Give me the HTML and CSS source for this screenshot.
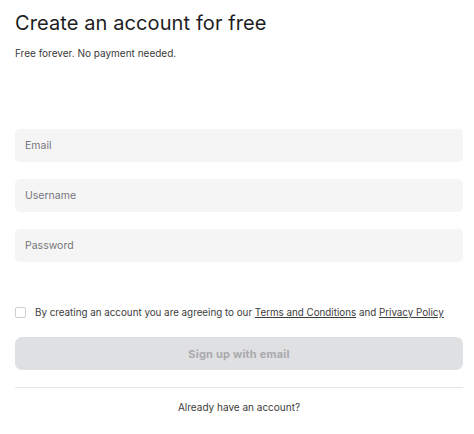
FILE: index.html
```html
<!DOCTYPE html>
<html lang="en">
<head>
<meta charset="utf-8">
<title>Create an account</title>
<link rel="stylesheet" href="styles.css">
</head>
<body>
<main class="signup">
  <header class="head">
    <h1 class="title">Create an account for free</h1>
    <p class="subtitle">Free forever. No payment needed.</p>
  </header>
  <form class="form">
    <div class="fields">
      <input class="field" type="email" placeholder="Email">
      <input class="field" type="text" placeholder="Username">
      <input class="field" type="password" placeholder="Password">
    </div>
    <label class="agree">
      <span class="box"></span>
      <span class="agree-text">By creating an account you are agreeing to our <a href="#">Terms and Conditions</a> and <a href="#">Privacy Policy</a></span>
    </label>
    <button class="submit" type="button" disabled>Sign up with email</button>
  </form>
  <div class="divider"></div>
  <p class="login">Already have an account?</p>
</main>
</body>
</html>
```

FILE: styles.css
```css
* { box-sizing: border-box; }
html, body { margin: 0; padding: 0; background: #ffffff; }
body {
  font-family: Inter, "Open Sans", "Liberation Sans", sans-serif;
  color: #222;
}
.signup {
  padding: 0 11px 0 15px;
  display: flex;
  flex-direction: column;
}
.head { padding-top: 10px; }
.title {
  margin: 0;
  font-size: 20px;
  line-height: 26px;
  font-weight: 400;
  color: #1d1d1f;
  letter-spacing: 0.1px;
}
.subtitle {
  margin: 10px 0 0;
  font-size: 10px;
  line-height: 14px;
  color: #3a3a3a;
}
.form {
  margin-top: 69px;
  display: flex;
  flex-direction: column;
}
.fields {
  display: flex;
  flex-direction: column;
  gap: 17px;
}
.field {
  display: block;
  width: 100%;
  height: 33px;
  border: none;
  border-radius: 5px;
  background: #f5f5f6;
  padding: 0 10px;
  font-family: inherit;
  font-size: 10.5px;
  color: #333;
  outline: none;
}
.field::placeholder { color: #76767a; }
.agree {
  margin-top: 45px;
  display: flex;
  align-items: center;
  gap: 9px;
  font-size: 9.8px;
  color: #3c3c3c;
}
.box {
  width: 11px;
  height: 11px;
  border: 1px solid #cfcfd2;
  border-radius: 2px;
  background: #fff;
  flex: none;
}
.agree-text a { color: #3c3c3c; text-decoration: underline; }
.submit {
  margin-top: 19px;
  height: 33px;
  border: none;
  border-radius: 7px;
  background: #dfe0e2;
  color: #a9aaad;
  font-family: inherit;
  font-size: 11px;
  font-weight: 700;
  letter-spacing: 0.2px;
}
.divider {
  margin-top: 17px;
  height: 1px;
  background: #e6e6e8;
}
.login {
  margin: 12px 0 0;
  text-align: center;
  font-size: 10px;
  line-height: 14px;
  color: #3c3c3c;
}
```
